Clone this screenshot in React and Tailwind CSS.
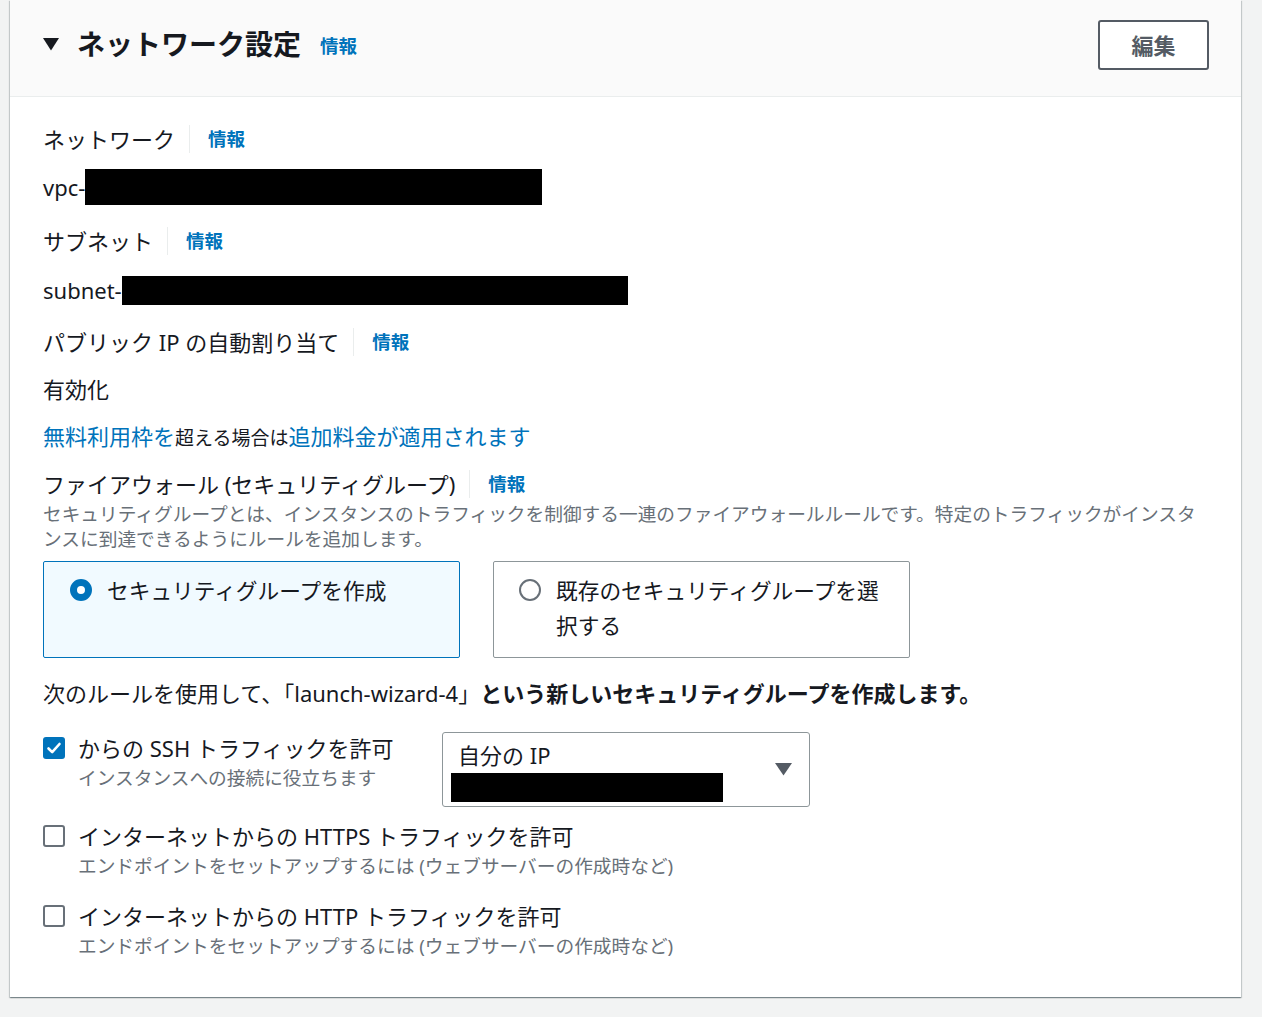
import React from "react";

function Info() {
    return <span className="text-[18.5px] font-bold text-[#0073bb] leading-[30px]">情報</span>;
}

function FieldLabel({ children, className = "" }) {
    return (
        <div className={`flex items-center h-[30px] ${className}`}>
            <span className="text-[22px] leading-[30px] text-[#16191f]">{children}</span>
            <span className="w-px h-[28px] bg-[#eaeded] ml-[14px] mr-[18px]" />
            <Info />
        </div>
    );
}

function Redacted({ w, h }) {
    return <span className={`inline-block bg-black ${w} ${h}`} />;
}

function Checkbox({ checked }) {
    if (checked) {
        return (
            <span className="w-[22px] h-[22px] shrink-0 rounded-[3px] bg-[#0073bb] flex items-center justify-center">
                <svg width="16" height="16" viewBox="0 0 16 16" fill="none">
                    <path d="M2.5 8.5l3.7 3.7L13.5 4" stroke="white" strokeWidth="2.6" strokeLinecap="round" strokeLinejoin="round" />
                </svg>
            </span>
        );
    }
    return <span className="w-[22px] h-[22px] shrink-0 rounded-[3px] border-2 border-[#687078] bg-white" />;
}

function RuleRow({ checked, title, sub, className = "" }) {
    return (
        <div className={`flex items-start gap-[13px] ${className}`}>
            <div className="h-[30px] flex items-center">
                <Checkbox checked={checked} />
            </div>
            <div>
                <p className="text-[22px] leading-[30px] text-[#16191f]">{title}</p>
                <p className="text-[18.7px] leading-[29px] text-[#687078]">{sub}</p>
            </div>
        </div>
    );
}

export default function App() {
    return (
        <div className="min-h-screen bg-[#f2f3f3] pl-[10px] font-['Noto_Sans','Noto_Sans_CJK_JP',sans-serif]">
            <div className="w-[1231px] bg-white shadow-[0_1px_1px_0_rgba(0,28,36,0.3),1px_1px_1px_0_rgba(0,28,36,0.15),-1px_1px_1px_0_rgba(0,28,36,0.15)]">

                {/* header */}
                <div className="h-[97px] bg-[#fafafa] border-b border-[#eaeded] flex items-center justify-between pl-[33px] pr-[32px] pb-[9px]">
                    <div className="flex items-center">
                        <svg width="16" height="13" viewBox="0 0 16 13" className="mt-[2px]">
                            <path d="M0 0h16L8 12.5z" fill="#16191f" />
                        </svg>
                        <h2 className="ml-[18px] text-[28px] font-bold text-[#16191f] leading-[36px]">ネットワーク設定</h2>
                        <span className="ml-[19px] mt-[5px] text-[18.5px] font-bold text-[#0073bb]">情報</span>
                    </div>
                    <button className="w-[111px] h-[50px] mt-[3px] border-2 border-[#545b64] rounded-[3px] bg-white text-[22px] font-bold text-[#545b64]">
                        編集
                    </button>
                </div>

                {/* body */}
                <div className="pl-[33px] pr-[33px] pt-[27px] pb-[37px]">
                    <FieldLabel>ネットワーク</FieldLabel>
                    <div className="mt-[15px] flex items-center h-[36px] text-[22px] text-[#16191f]">
                        vpc-<Redacted w="w-[457px]" h="h-[36px]" />
                    </div>

                    <FieldLabel className="mt-[21px]">サブネット</FieldLabel>
                    <div className="mt-[20px] flex items-center h-[29px] text-[22px] text-[#16191f]">
                        subnet-<Redacted w="w-[506px]" h="h-[29px]" />
                    </div>

                    <FieldLabel className="mt-[22px]">パブリック IP の自動割り当て</FieldLabel>
                    <p className="mt-[17px] text-[22px] leading-[30px] text-[#16191f]">有効化</p>
                    <p className="mt-[17px] leading-[30px] text-[#16191f]">
                        <span className="text-[22px] text-[#0073bb]">無料利用枠を</span>
                        <span className="text-[19px]">超える場合は</span>
                        <span className="text-[22px] text-[#0073bb]">追加料金が適用されます</span>
                    </p>

                    <FieldLabel className="mt-[15px]">ファイアウォール (セキュリティグループ)</FieldLabel>
                    <p className="mt-[2px] text-[18.7px] leading-[25px] text-[#687078]">
                        セキュリティグループとは、インスタンスのトラフィックを制御する一連のファイアウォールルールです。特定のトラフィックがインスタンスに到達できるようにルールを追加します。
                    </p>

                    {/* security group choice */}
                    <div className="mt-[10px] flex gap-[33px]">
                        <div className="w-[417px] h-[97px] border border-[#0073bb] rounded-[2px] bg-[#f1faff] pl-[26px] pr-[20px] pt-[11px] flex items-start gap-[15px]">
                            <span className="mt-[6px] w-[22px] h-[22px] shrink-0 rounded-full border-[7px] border-[#0073bb] bg-white" />
                            <span className="text-[21.7px] leading-[35px] text-[#16191f]">セキュリティグループを作成</span>
                        </div>
                        <div className="w-[417px] h-[97px] border border-[#8d9699] rounded-[2px] bg-white pl-[25px] pr-[20px] pt-[11px] flex items-start gap-[15px]">
                            <span className="mt-[6px] w-[22px] h-[22px] shrink-0 rounded-full border-2 border-[#687078] bg-white" />
                            <span className="text-[21.7px] leading-[35px] text-[#16191f]">既存のセキュリティグループを選択する</span>
                        </div>
                    </div>

                    <p className="mt-[20px] text-[22px] leading-[30px] text-[#16191f]">
                        次のルールを使用して、「launch-wizard-4」<span className="font-bold">という新しいセキュリティグループを作成します。</span>
                    </p>

                    {/* rules */}
                    <div className="mt-[24px] flex items-start">
                        <RuleRow
                            checked
                            className="w-[399px] pt-px"
                            title="からの SSH トラフィックを許可"
                            sub="インスタンスへの接続に役立ちます"
                        />
                        <div className="w-[368px] h-[75px] border-[1.5px] border-[#8d9699] rounded-[3px] pl-[8px] pr-[17px] flex items-start justify-between">
                            <div className="pt-[7px]">
                                <p className="pl-[7px] text-[22px] leading-[30px] text-[#16191f]">自分の IP</p>
                                <Redacted w="w-[272px]" h="h-[29px] block mt-[3px]" />
                            </div>
                            <svg width="17" height="13" viewBox="0 0 17 13" className="mt-[30px]">
                                <path d="M0 0h17L8.5 12.5z" fill="#545b64" />
                            </svg>
                        </div>
                    </div>

                    <RuleRow
                        className="mt-[14px]"
                        title="インターネットからの HTTPS トラフィックを許可"
                        sub="エンドポイントをセットアップするには (ウェブサーバーの作成時など)"
                    />
                    <RuleRow
                        className="mt-[21px]"
                        title="インターネットからの HTTP トラフィックを許可"
                        sub="エンドポイントをセットアップするには (ウェブサーバーの作成時など)"
                    />
                </div>
            </div>
        </div>
    );
}
